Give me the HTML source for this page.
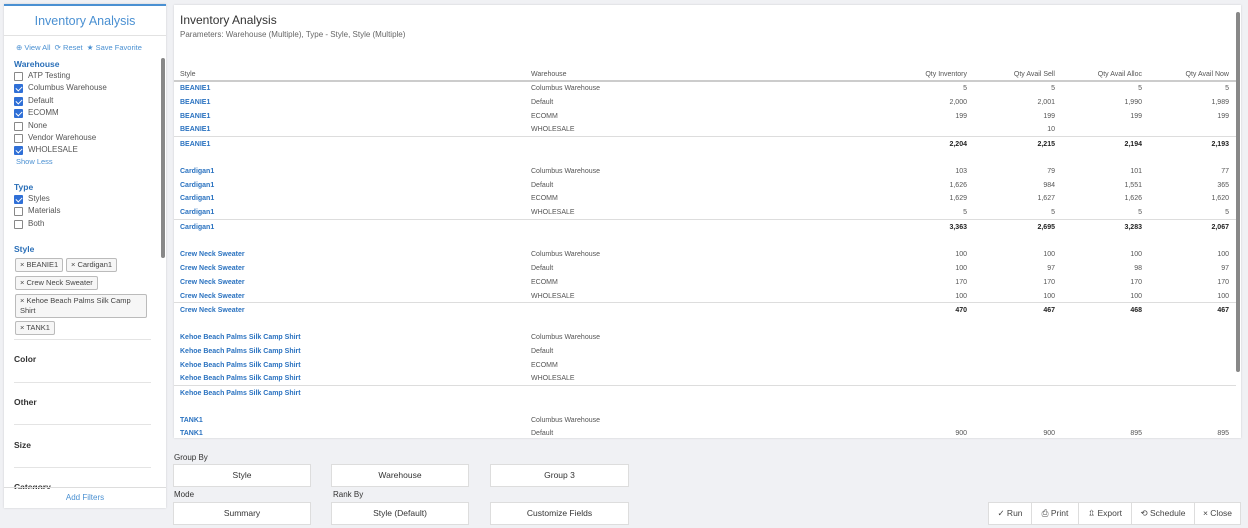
<!DOCTYPE html>
<html><head><meta charset="utf-8"><style>
*{box-sizing:border-box;margin:0;padding:0}
body{width:1248px;height:528px;background:#f0f1f4;font-family:"Liberation Sans",sans-serif;position:relative;overflow:hidden;color:#444}
.a{position:absolute;white-space:nowrap}
#left{position:absolute;left:4px;top:4px;width:162px;height:504px;background:#fff;border-top:2px solid #4a90d2;box-shadow:0 0 2px rgba(0,0,0,.15)}
.cb{position:absolute;left:10px;width:9px;height:9px;border:1px solid #888;border-radius:1px;background:#fff}
.cb.on{background:#2f6fd6;border-color:#2f6fd6}
.cb.on:after{content:"";position:absolute;left:2px;top:0px;width:3px;height:5px;border:solid #fff;border-width:0 1.3px 1.3px 0;transform:rotate(45deg)}
.lbl{position:absolute;left:24px;font-size:8px;color:#555}
.h{position:absolute;left:10px;font-size:8.5px;font-weight:bold;color:#2a6fb8}
.hb{position:absolute;left:10px;font-size:8.5px;font-weight:bold;color:#333}
.tag{position:absolute;border:1px solid #bbb;border-radius:2px;background:#f6f6f6;font-size:7.5px;color:#444;padding:1px 4px;line-height:10px}
.sep{position:absolute;left:10px;width:137px;height:1px;background:#e4e4e4}
#main{position:absolute;left:174px;top:5px;width:1067px;height:433px;background:#fff;box-shadow:0 0 2px rgba(0,0,0,.15)}
.r{position:absolute;left:0;width:1067px;height:10px;font-size:7px;line-height:10px;margin-top:2px}
.r span{position:absolute;top:0}
.s{left:6px;color:#2a72c0;font-weight:bold}
.w{left:357px;color:#555}
.n{text-align:right;width:80px;color:#555}
.c1{left:713px}.c2{left:801px}.c3{left:888px}.c4{left:975px}
.t span.n{color:#222;font-weight:bold}
.hl{position:absolute;left:0;width:1062px;height:1px;background:#ddd;margin-top:1px}
.btn{position:absolute;height:23px;background:#fff;border:1px solid #ddd;font-size:8.5px;color:#333;text-align:center;line-height:21px}
.lab{position:absolute;font-size:8px;color:#333}
.tb{position:absolute;top:502px;height:23px;background:#fff;border:1px solid #ddd;font-size:8.5px;color:#444;line-height:21px;text-align:center}
</style></head><body>
<div id="left">
<div class="a" style="left:0;width:162px;top:8px;text-align:center;font-size:12.5px;color:#4a90d2">Inventory Analysis</div>
<div class="a" style="left:0;top:29px;width:162px;height:1px;background:#e2e2e2"></div>
<div class="a" style="left:12px;top:37px;font-size:7.5px;color:#4a90d2">⊕ View All &nbsp;⟳ Reset &nbsp;★ Save Favorite</div>
<div class="a" style="left:157px;top:52px;width:4px;height:200px;background:#888;border-radius:2px"></div>
<div class="h" style="top:53px">Warehouse</div>
<div class="cb" style="top:66px"></div><div class="lbl" style="top:65px">ATP Testing</div>
<div class="cb on" style="top:78px"></div><div class="lbl" style="top:77px">Columbus Warehouse</div>
<div class="cb on" style="top:91px"></div><div class="lbl" style="top:90px">Default</div>
<div class="cb on" style="top:103px"></div><div class="lbl" style="top:102px">ECOMM</div>
<div class="cb" style="top:116px"></div><div class="lbl" style="top:115px">None</div>
<div class="cb" style="top:128px"></div><div class="lbl" style="top:127px">Vendor Warehouse</div>
<div class="cb on" style="top:140px"></div><div class="lbl" style="top:139px">WHOLESALE</div>
<div class="a" style="left:12px;top:151px;font-size:7.5px;color:#4a90d2">Show Less</div>
<div class="h" style="top:176px">Type</div>
<div class="cb on" style="top:189px"></div><div class="lbl" style="top:188px">Styles</div>
<div class="cb" style="top:201px"></div><div class="lbl" style="top:200px">Materials</div>
<div class="cb" style="top:214px"></div><div class="lbl" style="top:213px">Both</div>
<div class="h" style="top:238px">Style</div>
<div class="tag" style="left:11px;top:252px">× BEANIE1</div>
<div class="tag" style="left:62px;top:252px">× Cardigan1</div>
<div class="tag" style="left:11px;top:270px">× Crew Neck Sweater</div>
<div class="tag" style="left:11px;top:288px;width:132px;white-space:normal">× Kehoe Beach Palms Silk Camp Shirt</div>
<div class="tag" style="left:11px;top:315px">× TANK1</div>
<div class="sep" style="top:333px"></div>
<div class="hb" style="top:348px">Color</div>
<div class="sep" style="top:376px"></div>
<div class="hb" style="top:391px">Other</div>
<div class="sep" style="top:418px"></div>
<div class="hb" style="top:434px">Size</div>
<div class="sep" style="top:461px"></div>
<div class="hb" style="top:476px;height:7px;overflow:hidden">Category</div>
<div class="a" style="left:0;top:481px;width:162px;height:1px;background:#ddd"></div>
<div class="a" style="left:0;width:162px;top:487px;text-align:center;font-size:8px;color:#4a90d2">Add Filters</div>
</div>

<div id="main">
<div class="a" style="left:6px;top:8px;font-size:12px;color:#333">Inventory Analysis</div>
<div class="a" style="left:6px;top:25px;font-size:8px;color:#666">Parameters: Warehouse (Multiple), Type - Style, Style (Multiple)</div>
<div class="a" style="left:1062px;top:7px;width:4px;height:360px;background:#888;border-radius:2px"></div>
<div class="r" style="top:63px;color:#555"><span style="left:6px">Style</span><span class="w">Warehouse</span><span class="n c1">Qty Inventory</span><span class="n c2">Qty Avail Sell</span><span class="n c3">Qty Avail Alloc</span><span class="n c4">Qty Avail Now</span></div>
<div class="hl" style="top:74px;height:2px;background:#ccc"></div>

<div class="r" style="top:77px"><span class="s">BEANIE1</span><span class="w">Columbus Warehouse</span><span class="n c1">5</span><span class="n c2">5</span><span class="n c3">5</span><span class="n c4">5</span></div>
<div class="r" style="top:91px"><span class="s">BEANIE1</span><span class="w">Default</span><span class="n c1">2,000</span><span class="n c2">2,001</span><span class="n c3">1,990</span><span class="n c4">1,989</span></div>
<div class="r" style="top:105px"><span class="s">BEANIE1</span><span class="w">ECOMM</span><span class="n c1">199</span><span class="n c2">199</span><span class="n c3">199</span><span class="n c4">199</span></div>
<div class="r" style="top:118px"><span class="s">BEANIE1</span><span class="w">WHOLESALE</span><span class="n c2">10</span></div>
<div class="hl" style="top:130px"></div>
<div class="r t" style="top:133px"><span class="s">BEANIE1</span><span class="n c1">2,204</span><span class="n c2">2,215</span><span class="n c3">2,194</span><span class="n c4">2,193</span></div>

<div class="r" style="top:160px"><span class="s">Cardigan1</span><span class="w">Columbus Warehouse</span><span class="n c1">103</span><span class="n c2">79</span><span class="n c3">101</span><span class="n c4">77</span></div>
<div class="r" style="top:174px"><span class="s">Cardigan1</span><span class="w">Default</span><span class="n c1">1,626</span><span class="n c2">984</span><span class="n c3">1,551</span><span class="n c4">365</span></div>
<div class="r" style="top:187px"><span class="s">Cardigan1</span><span class="w">ECOMM</span><span class="n c1">1,629</span><span class="n c2">1,627</span><span class="n c3">1,626</span><span class="n c4">1,620</span></div>
<div class="r" style="top:201px"><span class="s">Cardigan1</span><span class="w">WHOLESALE</span><span class="n c1">5</span><span class="n c2">5</span><span class="n c3">5</span><span class="n c4">5</span></div>
<div class="hl" style="top:213px"></div>
<div class="r t" style="top:216px"><span class="s">Cardigan1</span><span class="n c1">3,363</span><span class="n c2">2,695</span><span class="n c3">3,283</span><span class="n c4">2,067</span></div>

<div class="r" style="top:243px"><span class="s">Crew Neck Sweater</span><span class="w">Columbus Warehouse</span><span class="n c1">100</span><span class="n c2">100</span><span class="n c3">100</span><span class="n c4">100</span></div>
<div class="r" style="top:257px"><span class="s">Crew Neck Sweater</span><span class="w">Default</span><span class="n c1">100</span><span class="n c2">97</span><span class="n c3">98</span><span class="n c4">97</span></div>
<div class="r" style="top:271px"><span class="s">Crew Neck Sweater</span><span class="w">ECOMM</span><span class="n c1">170</span><span class="n c2">170</span><span class="n c3">170</span><span class="n c4">170</span></div>
<div class="r" style="top:285px"><span class="s">Crew Neck Sweater</span><span class="w">WHOLESALE</span><span class="n c1">100</span><span class="n c2">100</span><span class="n c3">100</span><span class="n c4">100</span></div>
<div class="hl" style="top:296px"></div>
<div class="r t" style="top:299px"><span class="s">Crew Neck Sweater</span><span class="n c1">470</span><span class="n c2">467</span><span class="n c3">468</span><span class="n c4">467</span></div>

<div class="r" style="top:326px"><span class="s">Kehoe Beach Palms Silk Camp Shirt</span><span class="w">Columbus Warehouse</span></div>
<div class="r" style="top:340px"><span class="s">Kehoe Beach Palms Silk Camp Shirt</span><span class="w">Default</span></div>
<div class="r" style="top:354px"><span class="s">Kehoe Beach Palms Silk Camp Shirt</span><span class="w">ECOMM</span></div>
<div class="r" style="top:367px"><span class="s">Kehoe Beach Palms Silk Camp Shirt</span><span class="w">WHOLESALE</span></div>
<div class="hl" style="top:379px"></div>
<div class="r t" style="top:382px"><span class="s">Kehoe Beach Palms Silk Camp Shirt</span></div>

<div class="r" style="top:409px"><span class="s">TANK1</span><span class="w">Columbus Warehouse</span></div>
<div class="r" style="top:422px"><span class="s">TANK1</span><span class="w">Default</span><span class="n c1">900</span><span class="n c2">900</span><span class="n c3">895</span><span class="n c4">895</span></div>
</div>

<div class="lab" style="left:174px;top:453px">Group By</div>
<div class="btn" style="left:173px;top:464px;width:138px">Style</div>
<div class="btn" style="left:331px;top:464px;width:138px">Warehouse</div>
<div class="btn" style="left:490px;top:464px;width:139px">Group 3</div>
<div class="lab" style="left:174px;top:490px">Mode</div>
<div class="lab" style="left:333px;top:490px">Rank By</div>
<div class="btn" style="left:173px;top:502px;width:138px">Summary</div>
<div class="btn" style="left:331px;top:502px;width:138px">Style (Default)</div>
<div class="btn" style="left:490px;top:502px;width:139px">Customize Fields</div>

<div class="tb" style="left:988px;width:44px">✓ Run</div>
<div class="tb" style="left:1031px;width:48px">⎙ Print</div>
<div class="tb" style="left:1078px;width:54px">⇫ Export</div>
<div class="tb" style="left:1131px;width:64px">⟲ Schedule</div>
<div class="tb" style="left:1194px;width:47px">× Close</div>
</body></html>
